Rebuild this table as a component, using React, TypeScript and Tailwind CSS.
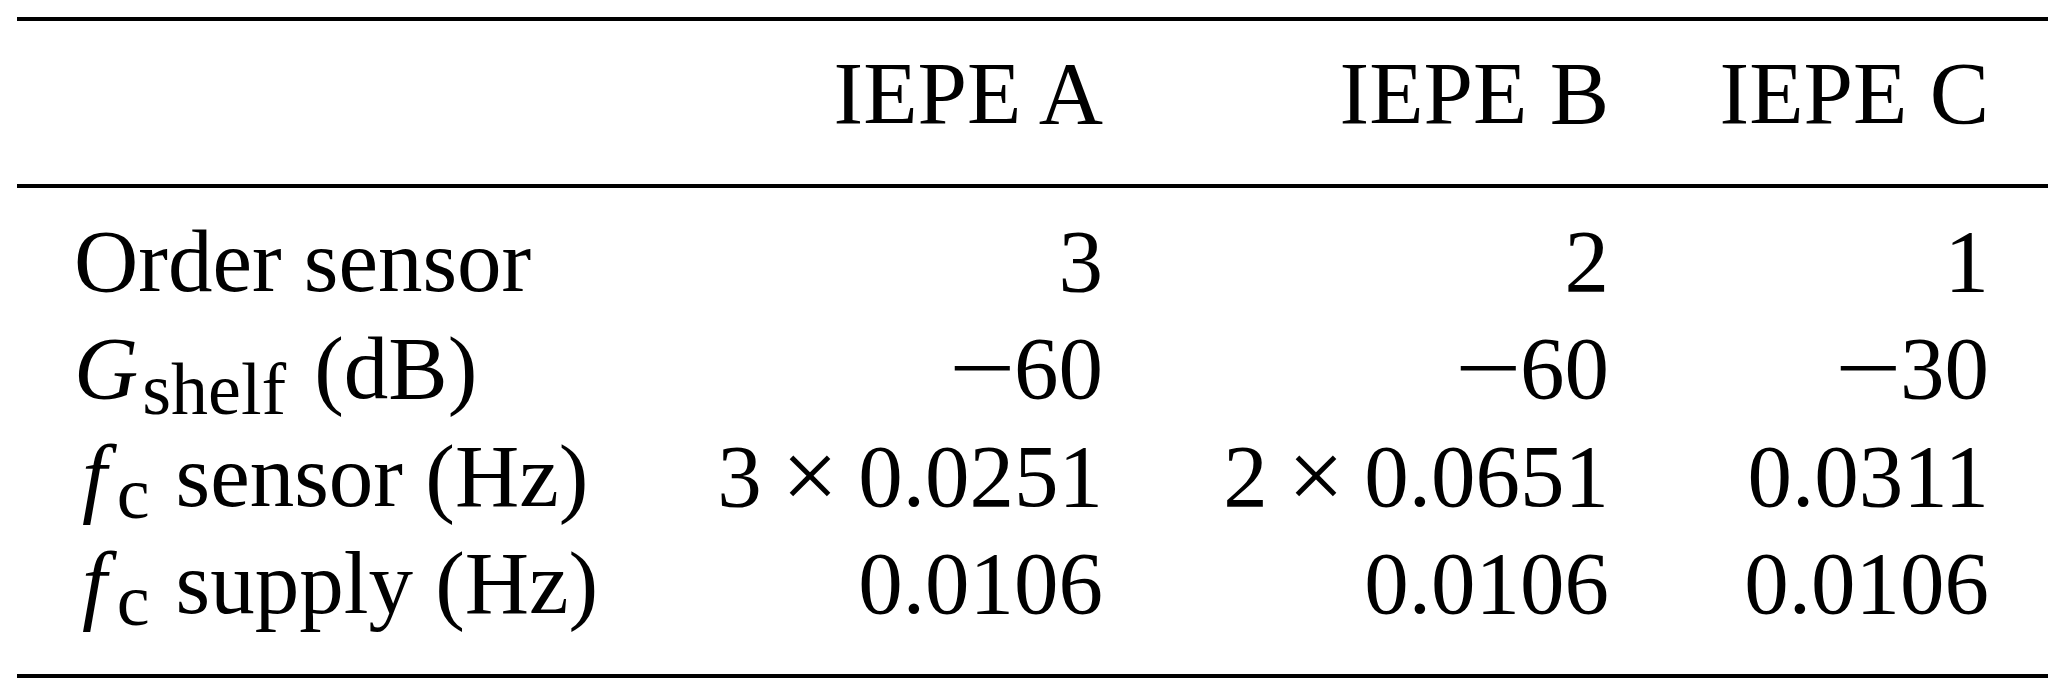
import type { ReactNode } from 'react'

type Row = { label: ReactNode; values: ReactNode[] }

const Times = ({ a, b }: { a: string; b: string }) => (
  <>
    {a}
    <span className="relative top-[3px] mx-[20px] text-[100px] leading-none">×</span>
    {b}
  </>
)

const Minus = ({ n }: { n: string }) => (
  <>
    <span className="inline-block mr-[7px] scale-x-[1.33]">−</span>
    {n}
  </>
)

const Fc = ({ rest }: { rest: string }) => (
  <>
    <i className="ml-[8px]">f</i>
    <span className="relative top-[12px] ml-[10px] text-[74px] leading-none">c</span>
    <span className="ml-[26px]">{rest}</span>
  </>
)

const rows: Row[] = [
  { label: 'Order sensor', values: ['3', '2', '1'] },
  {
    label: (
      <>
        <i>G</i>
        <span className="relative top-[16px] ml-[4px] text-[74px] leading-none">shelf</span>
        <span className="ml-[28px]">(dB)</span>
      </>
    ),
    values: [<Minus n="60" />, <Minus n="60" />, <Minus n="30" />],
  },
  {
    label: <Fc rest="sensor (Hz)" />,
    values: [<Times a="3" b="0.0251" />, <Times a="2" b="0.0651" />, '0.0311'],
  },
  { label: <Fc rest="supply (Hz)" />, values: ['0.0106', '0.0106', '0.0106'] },
]

// 表の罫線は booktabs 風（上・中・下の3本）
function Rule() {
  return <div className="h-[4px] bg-black" />
}

export default function App() {
  const grid = 'grid grid-cols-[648px_494px_506px_383px] text-[89px] leading-[107.5px]'
  const numCell = ['pr-[56px] text-right', 'pr-[56px] text-right', 'pr-[59px] text-right']

  return (
    <div className="w-[2067px] h-[695px] bg-white pt-[17px] pl-[17px] font-['Liberation_Serif',serif] text-black">
      <div className="w-[2031px]">
        <Rule />
        <div className={`${grid} pt-[19px] pb-[36px]`}>
          <div />
          {['IEPE A', 'IEPE B', 'IEPE C'].map((h, i) => (
            <div key={h} className={`${numCell[i]} whitespace-nowrap`}>
              {h}
            </div>
          ))}
        </div>
        <Rule />
        <div className={`${grid} pt-[20px] pb-[36px]`}>
          {rows.map((r, ri) => (
            <div key={ri} className="contents">
              <div className="pl-[57px] whitespace-nowrap">{r.label}</div>
              {r.values.map((v, i) => (
                <div key={i} className={`${numCell[i]} whitespace-nowrap`}>
                  {v}
                </div>
              ))}
            </div>
          ))}
        </div>
        <Rule />
      </div>
    </div>
  )
}
